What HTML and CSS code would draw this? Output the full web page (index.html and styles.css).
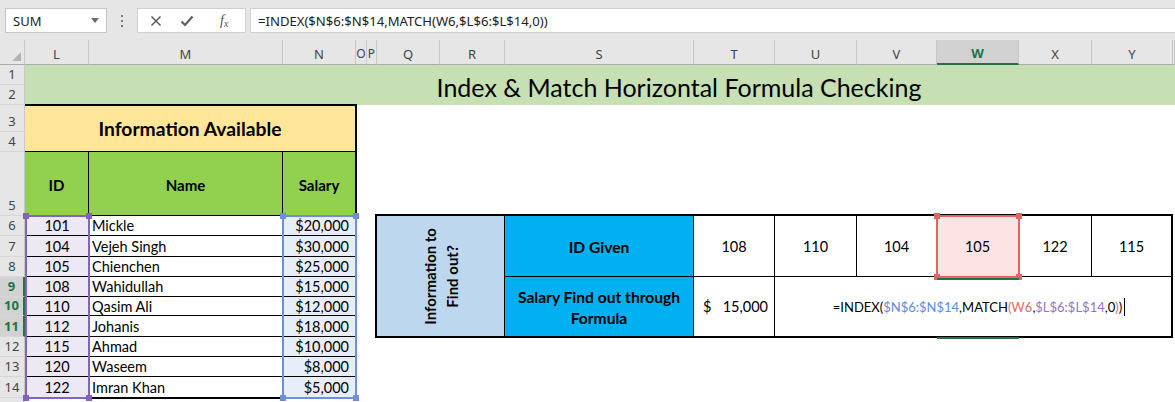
FILE: index.html
```html
<!DOCTYPE html>
<html>
<head>
<meta charset="utf-8">
<link rel="stylesheet" href="styles.css">
</head>
<body>
<div class="fbar">
  <div class="namebox"><span>SUM</span><svg class="caret" width="8" height="5" viewBox="0 0 8 5"><path d="M0 0h8L4 5z" fill="#6b6b6b"/></svg></div>
  <div class="dots"><i></i><i></i><i></i></div>
  <div class="btns">
    <svg class="ic-x" width="12" height="12" viewBox="0 0 12 12"><path d="M1.5 1.5l9 9M10.5 1.5l-9 9" stroke="#5a5a5a" stroke-width="1.5" fill="none"/></svg>
    <svg class="ic-ok" width="14" height="12" viewBox="0 0 14 12"><path d="M1.5 6.5l3.5 3.5L12.5 1.5" stroke="#5a5a5a" stroke-width="2" fill="none"/></svg>
    <span class="fx">f<span class="fxs">x</span></span>
  </div>
  <div class="finput">=INDEX($N$6:$N$14,MATCH(W6,$L$6:$L$14,0))</div>
</div>

<div class="sheet">
  <div class="corner"><svg width="9" height="9" viewBox="0 0 9 9"><path d="M9 0V9H0z" fill="#b4b4b4"/></svg></div>
  <div class="ch">L</div>
  <div class="ch">M</div>
  <div class="ch">N</div>
  <div class="ch narrow">O</div>
  <div class="ch narrow">P</div>
  <div class="ch">Q</div>
  <div class="ch">R</div>
  <div class="ch">S</div>
  <div class="ch">T</div>
  <div class="ch">U</div>
  <div class="ch">V</div>
  <div class="ch sel">W</div>
  <div class="ch">X</div>
  <div class="ch">Y</div>
  <div class="ch"></div>

  <div class="rh">1</div>
  <div class="rh">2</div>
  <div class="rh">3</div>
  <div class="rh">4</div>
  <div class="rh">5</div>
  <div class="rh">6</div>
  <div class="rh">7</div>
  <div class="rh">8</div>
  <div class="rh sel">9</div>
  <div class="rh sel">10</div>
  <div class="rh sel">11</div>
  <div class="rh">12</div>
  <div class="rh">13</div>
  <div class="rh">14</div>
  <div class="rh cut"></div>

  <div class="title"><span>Index &amp; Match Horizontal Formula Checking</span></div>

  <div class="ltable">
    <div class="lt-title">Information Available</div>
    <div class="lt-h sep">ID</div>
    <div class="lt-h sep">Name</div>
    <div class="lt-h">Salary</div>

    <div class="id">101</div><div class="nm">Mickle</div><div class="sal">$20,000</div>
    <div class="id">104</div><div class="nm">Vejeh Singh</div><div class="sal">$30,000</div>
    <div class="id">105</div><div class="nm">Chienchen</div><div class="sal">$25,000</div>
    <div class="id">108</div><div class="nm">Wahidullah</div><div class="sal">$15,000</div>
    <div class="id">110</div><div class="nm">Qasim Ali</div><div class="sal">$12,000</div>
    <div class="id">112</div><div class="nm">Johanis</div><div class="sal">$18,000</div>
    <div class="id">115</div><div class="nm">Ahmad</div><div class="sal">$10,000</div>
    <div class="id">120</div><div class="nm">Waseem</div><div class="sal">$8,000</div>
    <div class="id end">122</div><div class="nm end">Imran Khan</div><div class="sal end">$5,000</div>

    <div class="selP"><i class="h tl"></i><i class="h tr"></i><i class="h bl"></i><i class="h br"></i></div>
    <div class="selB"><i class="h tl"></i><i class="h tr"></i><i class="h bl"></i><i class="h br"></i></div>
  </div>

  <div class="rtable">
    <div class="rt-info"><span class="vtext">Information to<br>Find out?</span></div>
    <div class="rt-lbl top">ID Given</div>
    <div class="rt-v">108</div>
    <div class="rt-v">110</div>
    <div class="rt-v">104</div>
    <div class="rt-v pink">105</div>
    <div class="rt-v">122</div>
    <div class="rt-v last">115</div>
    <div class="rt-lbl">Salary Find out through<br>Formula</div>
    <div class="rt-dollar"><span>$</span><span>15,000</span></div>
    <div class="rt-formula"><span class="ftext">=INDEX(<span class="fb">$N$6:$N$14</span>,MATCH<span class="fr">(W6</span>,<span class="fp">$L$6:$L$14</span>,0<span class="fr">)</span>)</span><span class="cursor"></span></div>

    <div class="selR"><i class="h tl"></i><i class="h tr"></i><i class="h bl"></i><i class="h br"></i></div>
    <div class="gm"></div>
  </div>
</div>
</body>
</html>
```

FILE: styles.css
```css
* { box-sizing: border-box; }

body {
  margin: 0;
  width: 1175px;
  height: 402px;
  overflow: hidden;
  background: #fff;
  font-family: "Lato", "Liberation Sans", sans-serif;
  color: #000;
}

/* ---------- formula bar ---------- */
.fbar {
  height: 40px;
  background: #e6e6e6;
  display: flex;
  align-items: flex-start;
  padding-top: 8px;
}

.namebox {
  margin-left: 5px;
  width: 102px;
  height: 25px;
  background: #fff;
  border: 1px solid #c6c6c6;
  display: flex;
  align-items: center;
  justify-content: space-between;
  padding: 0 7px 0 7px;
  font: 13px "Noto Sans", sans-serif;
  color: #222;
}

.dots {
  width: 30px;
  height: 25px;
  display: flex;
  flex-direction: column;
  align-items: center;
  justify-content: center;
  gap: 3px;
}

.dots i {
  display: block;
  width: 2px;
  height: 2px;
  background: #7a7a7a;
}

.btns {
  width: 109px;
  height: 25px;
  background: #fff;
  border: 1px solid #d0d0d0;
  display: flex;
  align-items: center;
}

.ic-x { margin-left: 12px; }
.ic-ok { margin-left: 18px; }

.fx {
  margin-left: 26px;
  font: italic 14px "Liberation Serif", serif;
  color: #555;
}

.fxs {
  font-size: 10px;
  position: relative;
  top: 2px;
}

.finput {
  margin-left: 4px;
  flex: 1;
  height: 25px;
  background: #fff;
  border: 1px solid #d0d0d0;
  border-right: 0;
  padding-left: 7px;
  display: flex;
  align-items: center;
  font: 13.1px "Noto Sans", sans-serif;
  color: #222;
}

/* ---------- sheet grid ---------- */
.sheet {
  display: grid;
  grid-template-columns: 25px 64px 194px 73px 11px 10px 63px 65px 189px 81px 82px 80px 82px 73px 81px 2px;
  grid-template-rows: 25px 20px 20px 27px 20px 64px 20px 21px 20px 20px 19px 21px 20px 20px 21px 4px;
}

.corner {
  background: #e6e6e6;
  border-right: 1px solid #c8c8c8;
  border-bottom: 1px solid #ababab;
  display: flex;
  align-items: flex-end;
  justify-content: flex-end;
  padding: 0 3px 3px 0;
}

.ch {
  background: #e6e6e6;
  border-right: 1px solid #c8c8c8;
  border-bottom: 1px solid #ababab;
  display: flex;
  align-items: center;
  justify-content: center;
  font: 13px "Noto Sans", sans-serif;
  color: #444;
  padding-top: 3px;
}

.ch.narrow {
  font-size: 12px;
  overflow: visible;
}

.ch.sel {
  background: #d2d2d2;
  color: #217346;
  font-weight: bold;
  border-bottom: 2px solid #217346;
}

.rh {
  grid-column: 1;
  background: #e6e6e6;
  border-right: 1px solid #c8c8c8;
  border-bottom: 1px solid #d6d6d6;
  display: flex;
  align-items: flex-end;
  justify-content: center;
  font: 13px/17px "Noto Sans", sans-serif;
  color: #444;
  padding-bottom: 1px;
}

.rh.cut {
  padding: 0;
  border-bottom: 0;
}

.rh.sel {
  background: #d2d2d2;
  color: #217346;
  font-weight: bold;
  border-right: 2px solid #217346;
}

.title {
  grid-column: 2 / -1;
  grid-row: 2 / 4;
  background: #c6e0b4;
  display: flex;
  align-items: flex-end;
  justify-content: center;
  padding-left: 158px;
  padding-bottom: 2px;
  font-size: 25px;
  line-height: 32px;
}

/* ---------- left table ---------- */
.ltable {
  grid-column: 2 / 5;
  grid-row: 4 / 16;
  margin: -1px -1px -1px 0;
  border: 2px solid #000;
  border-left: 0;
  position: relative;
  display: grid;
  grid-template-columns: 64px 194px 72px;
  grid-template-rows: 46px 64px 20px 21px 20px 20px 19px 21px 20px 20px 20px;
  font-size: 14.5px;
}

.lt-title {
  grid-column: 1 / -1;
  background: #ffe699;
  border-bottom: 1px solid #000;
  display: flex;
  align-items: center;
  justify-content: center;
  font-weight: bold;
  font-size: 19.3px;
}

.lt-h {
  background: #92d050;
  border-bottom: 1px solid #000;
  display: flex;
  align-items: center;
  justify-content: center;
  font-weight: bold;
  font-size: 15px;
  padding-top: 2px;
}

.lt-h.sep { border-right: 1px solid #000; }

.id, .nm, .sal {
  display: flex;
  align-items: center;
  border-bottom: 1px solid #000;
  white-space: nowrap;
}

.id {
  background: #ece8f4;
  justify-content: center;
}

.nm {
  padding-left: 3px;
}

.sal {
  background: #e8eef9;
  justify-content: flex-end;
  padding-right: 6px;
}

.id.end, .nm.end, .sal.end { border-bottom: 0; }

/* selection overlays: positioned over grid areas, outside auto-placement */
.selP, .selB, .selR, .gm {
  position: absolute;
}

.selP {
  grid-column: 1 / 2;
  grid-row: 3 / 12;
  top: -1px;
  right: -1px;
  bottom: -2px;
  left: 0;
  border: 2px solid #8064bf;
  color: #8064bf;
}

.selB {
  grid-column: 3 / 4;
  grid-row: 3 / 12;
  top: -1px;
  right: -2px;
  bottom: -2px;
  left: -1px;
  border: 2px solid #6f8fdb;
  color: #6f8fdb;
}

.h {
  position: absolute;
  width: 6px;
  height: 6px;
  background: currentColor;
}

.h.tl { left: -4px; top: -4px; }
.h.tr { right: -4px; top: -4px; }
.h.bl { left: -4px; bottom: -4px; }
.h.br { right: -4px; bottom: -4px; }

/* ---------- right table ---------- */
.rtable {
  grid-column: 7 / 16;
  grid-row: 7 / 13;
  margin: -2px 0 -1px -2px;
  border: 2px solid #000;
  position: relative;
  display: grid;
  grid-template-columns: 128px 189px 81px 82px 80px 82px 73px 79px;
  grid-template-rows: 61px 59px;
  font-size: 14.5px;
}

.rt-info {
  grid-row: 1 / 3;
  background: #bdd7ee;
  border-right: 1px solid #000;
  display: flex;
  align-items: center;
  justify-content: center;
}

.vtext {
  writing-mode: vertical-rl;
  transform: rotate(180deg);
  text-align: center;
  font-weight: bold;
  font-size: 15px;
  line-height: 22px;
}

.rt-lbl {
  background: #00b0f0;
  border-right: 1px solid #000;
  display: flex;
  align-items: center;
  justify-content: center;
  text-align: center;
  font-weight: bold;
  font-size: 15.6px;
  line-height: 21px;
  padding-top: 2px;
}

.rt-lbl.top { border-bottom: 1px solid #000; }

.rt-v {
  border-right: 1px solid #000;
  border-bottom: 1px solid #000;
  display: flex;
  align-items: center;
  justify-content: center;
}

.rt-v.last { border-right: 0; }
.rt-v.pink { background: #fce4e4; }

.rt-dollar {
  border-right: 1px solid #000;
  display: flex;
  align-items: center;
  justify-content: space-between;
  padding: 0 6px 0 9px;
}

.rt-formula {
  grid-column: 4 / -1;
  display: flex;
  align-items: center;
  justify-content: center;
  padding-left: 12px;
  white-space: nowrap;
  font-size: 13px;
}

.fb { color: #5b8ee0; }
.fr { color: #e26b6b; }
.fp { color: #9a6fc7; }

.cursor {
  display: inline-block;
  width: 1px;
  height: 18px;
  background: #000;
  margin-left: 2px;
}

.selR {
  grid-column: 6 / 7;
  grid-row: 1 / 2;
  top: -1px;
  right: -1px;
  bottom: -1px;
  left: -1px;
  border: 2px solid #e06666;
  color: #e06666;
}

.gm {
  grid-column: 6 / 7;
  grid-row: 2 / 3;
  top: 1px;
  right: 0;
  bottom: -3px;
  left: 0;
  border-top: 2px solid #217346;
  border-bottom: 2px solid #217346;
}
```
